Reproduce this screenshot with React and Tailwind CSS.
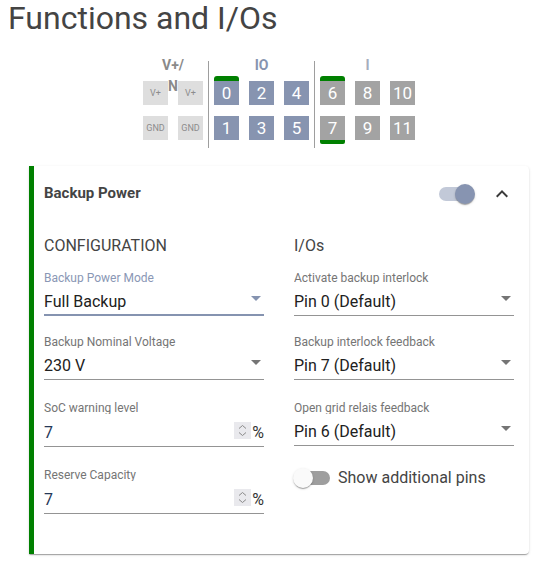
import React from "react";

const ioTop = [{ n: "0", bar: true }, { n: "2" }, { n: "4" }];
const ioBottom = [{ n: "1" }, { n: "3" }, { n: "5" }];
const inTop = [{ n: "6", bar: true }, { n: "8" }, { n: "10" }];
const inBottom = [{ n: "7", bar: true }, { n: "9" }, { n: "11" }];
const pwrTop = [{ n: "V+" }, { n: "V+" }];
const pwrBottom = [{ n: "GND" }, { n: "GND" }];

const boxStyles = {
  pwr: "bg-[#dedede] text-[#8c8c8c] text-[9px]",
  io: "bg-[#8794b0] text-white text-[17px]",
  in: "bg-[#a3a3a3] text-white text-[17px]",
};

const PinBox = ({ label, kind }) => (
  <div
    className={`w-[25px] h-[24px] flex items-center justify-center leading-none ${boxStyles[kind]}`}
  >
    {label}
  </div>
);

const PinGroup = ({ title, titleColor, top, bottom, kind }) => (
  <div className="flex flex-col">
    <div className="relative z-10 h-[21px] flex justify-center">
      <span
        className={`w-[26px] break-all text-center text-[14px] leading-[21px] font-bold ${titleColor}`}
      >
        {title}
      </span>
    </div>
    <div className="flex gap-[10px]">
      {top.map((p, i) => (
        <div key={i} className="flex flex-col">
          <div className="h-[5px]">
            {p.bar && <div className="h-[5px] bg-[#008000] rounded-t-[3px]" />}
          </div>
          <PinBox label={p.n} kind={kind} />
        </div>
      ))}
    </div>
    <div className="mt-[11px] flex gap-[10px]">
      {bottom.map((p, i) => (
        <div key={i} className="flex flex-col">
          <PinBox label={p.n} kind={kind} />
          <div className="h-[4px]">
            {p.bar && <div className="h-[4px] bg-[#008000] rounded-b-[2px]" />}
          </div>
        </div>
      ))}
    </div>
  </div>
);

const Separator = () => <div className="mx-[5px] mt-[6px] h-[87px] w-px bg-[#9e9e9e]" />;

const ArrowDrop = ({ color }) => (
  <svg
    viewBox="0 0 24 24"
    className="absolute right-[-4px] top-[2px] w-6 h-6"
    fill={color}
  >
    <path d="M7 10l5 5 5-5z" />
  </svg>
);

// labels are clipped just under the baseline, like the original
const labelCls = "h-[12px] leading-[13px] overflow-hidden text-[12px]";

const SelectField = ({ label, value, focused, height }) => (
  <div className={height}>
    <div className={`${labelCls} ${focused ? "text-[#8a97b5]" : "text-[#757575]"}`}>
      {label}
    </div>
    <div
      className={`relative pt-[8px] ${
        focused
          ? "pb-[3px] border-b-2 border-[#8593b0]"
          : "pb-[4px] border-b border-[#949494]"
      }`}
    >
      <div className="text-[16px] leading-[19px] text-[#212121]">{value}</div>
      <ArrowDrop color={focused ? "#8593b0" : "#757575"} />
    </div>
  </div>
);

const Spinner = () => (
  <div className="w-[17px] h-[17px] -mt-[1px] bg-[#e9e9ed] flex items-center justify-center">
    <svg viewBox="0 0 17 17" className="w-[17px] h-[17px]" fill="none" stroke="#8a8a8a" strokeWidth="1">
      <polyline points="5,6.5 8.5,3.5 12,6.5" />
      <polyline points="5,10.5 8.5,13.5 12,10.5" />
    </svg>
  </div>
);

const NumberField = ({ label, value, height }) => (
  <div className={height}>
    <div className={`${labelCls} text-[#757575]`}>{label}</div>
    <div className="flex items-start pt-[9px] pb-[4px] border-b border-[#949494]">
      <div className="flex-1 text-[16px] leading-[19px] text-[#263857]">{value}</div>
      <Spinner />
      <div className="text-[16px] leading-[19px] text-[#333] ml-px">%</div>
    </div>
  </div>
);

const knobShadow =
  "shadow-[0px_2px_1px_-1px_rgba(0,0,0,0.2),0px_1px_1px_0px_rgba(0,0,0,0.14),0px_1px_3px_0px_rgba(0,0,0,0.12)]";

const PinGrid = () => (
  <div className="mt-[19px] flex justify-center">
    <PinGroup title="V+/N" titleColor="text-[#8a8a8a]" top={pwrTop} bottom={pwrBottom} kind="pwr" />
    <Separator />
    <PinGroup title="IO" titleColor="text-[#8794b0]" top={ioTop} bottom={ioBottom} kind="io" />
    <Separator />
    <PinGroup title="I" titleColor="text-[#a6adbd]" top={inTop} bottom={inBottom} kind="in" />
  </div>
);

const BackupCard = () => (
  <div className="mt-[18px] bg-white border-l-[5px] border-l-[#008000] pl-[10px] pr-[15px] pb-[40px] rounded-r-[4px] shadow-[0px_2px_1px_-1px_rgba(0,0,0,0.2),0px_1px_1px_0px_rgba(0,0,0,0.14),0px_1px_3px_0px_rgba(0,0,0,0.12)]">
    <div className="h-[55px] flex items-center justify-between">
      <span className="text-[15px] font-bold text-[#444]">Backup Power</span>
      <div className="flex items-center">
        <div className="relative w-[36px] h-[20px]">
          <div className="absolute left-0 top-[3px] w-[34px] h-[14px] rounded-full bg-[#c2c9d8]" />
          <div className={`absolute left-[16px] top-0 w-[20px] h-[20px] rounded-full bg-[#8794b1] ${knobShadow}`} />
        </div>
        <svg viewBox="0 0 24 24" className="ml-[15px] w-6 h-6" fill="#3a3a3a">
          <path d="M7.41 15.41 12 10.83l4.59 4.58L18 14l-6-6-6 6z" />
        </svg>
      </div>
    </div>
    <div className="pt-[15px] grid grid-cols-2 gap-x-[30px]">
      <div>
        <div className="h-[19px] leading-[19px] text-[16px] text-[#444] mb-[17px]">CONFIGURATION</div>
        <SelectField label="Backup Power Mode" value="Full Backup" focused height="h-[64px]" />
        <SelectField label="Backup Nominal Voltage" value="230 V" height="h-[66px]" />
        <NumberField label="SoC warning level" value="7" height="h-[67px]" />
        <NumberField label="Reserve Capacity" value="7" height="" />
      </div>
      <div>
        <div className="h-[19px] leading-[19px] text-[16px] text-[#444] mb-[17px]">I/Os</div>
        <SelectField label="Activate backup interlock" value="Pin 0 (Default)" height="h-[64px]" />
        <SelectField label="Backup interlock feedback" value="Pin 7 (Default)" height="h-[66px]" />
        <SelectField label="Open grid relais feedback" value="Pin 6 (Default)" height="h-[65px]" />
        <div className="flex items-center h-[21px] -ml-px">
          <div className="relative w-[37px] h-[20px]">
            <div className="absolute left-[3px] top-[3px] w-[34px] h-[14px] rounded-full bg-[#9e9e9e]" />
            <div className={`absolute left-0 top-0 w-[20px] h-[20px] rounded-full bg-[#fafafa] ${knobShadow}`} />
          </div>
          <span className="ml-[8px] text-[16px] leading-[19px] text-[#444]">Show additional pins</span>
        </div>
      </div>
    </div>
  </div>
);

export default function App() {
  return (
    <div className="min-h-screen bg-white px-2 font-['Roboto',sans-serif]">
      <h1 className="text-[32px] leading-[36px] font-normal text-[#444]">Functions and I/Os</h1>
      <div className="pl-[21px]">
        <PinGrid />
        <BackupCard />
      </div>
    </div>
  );
}
